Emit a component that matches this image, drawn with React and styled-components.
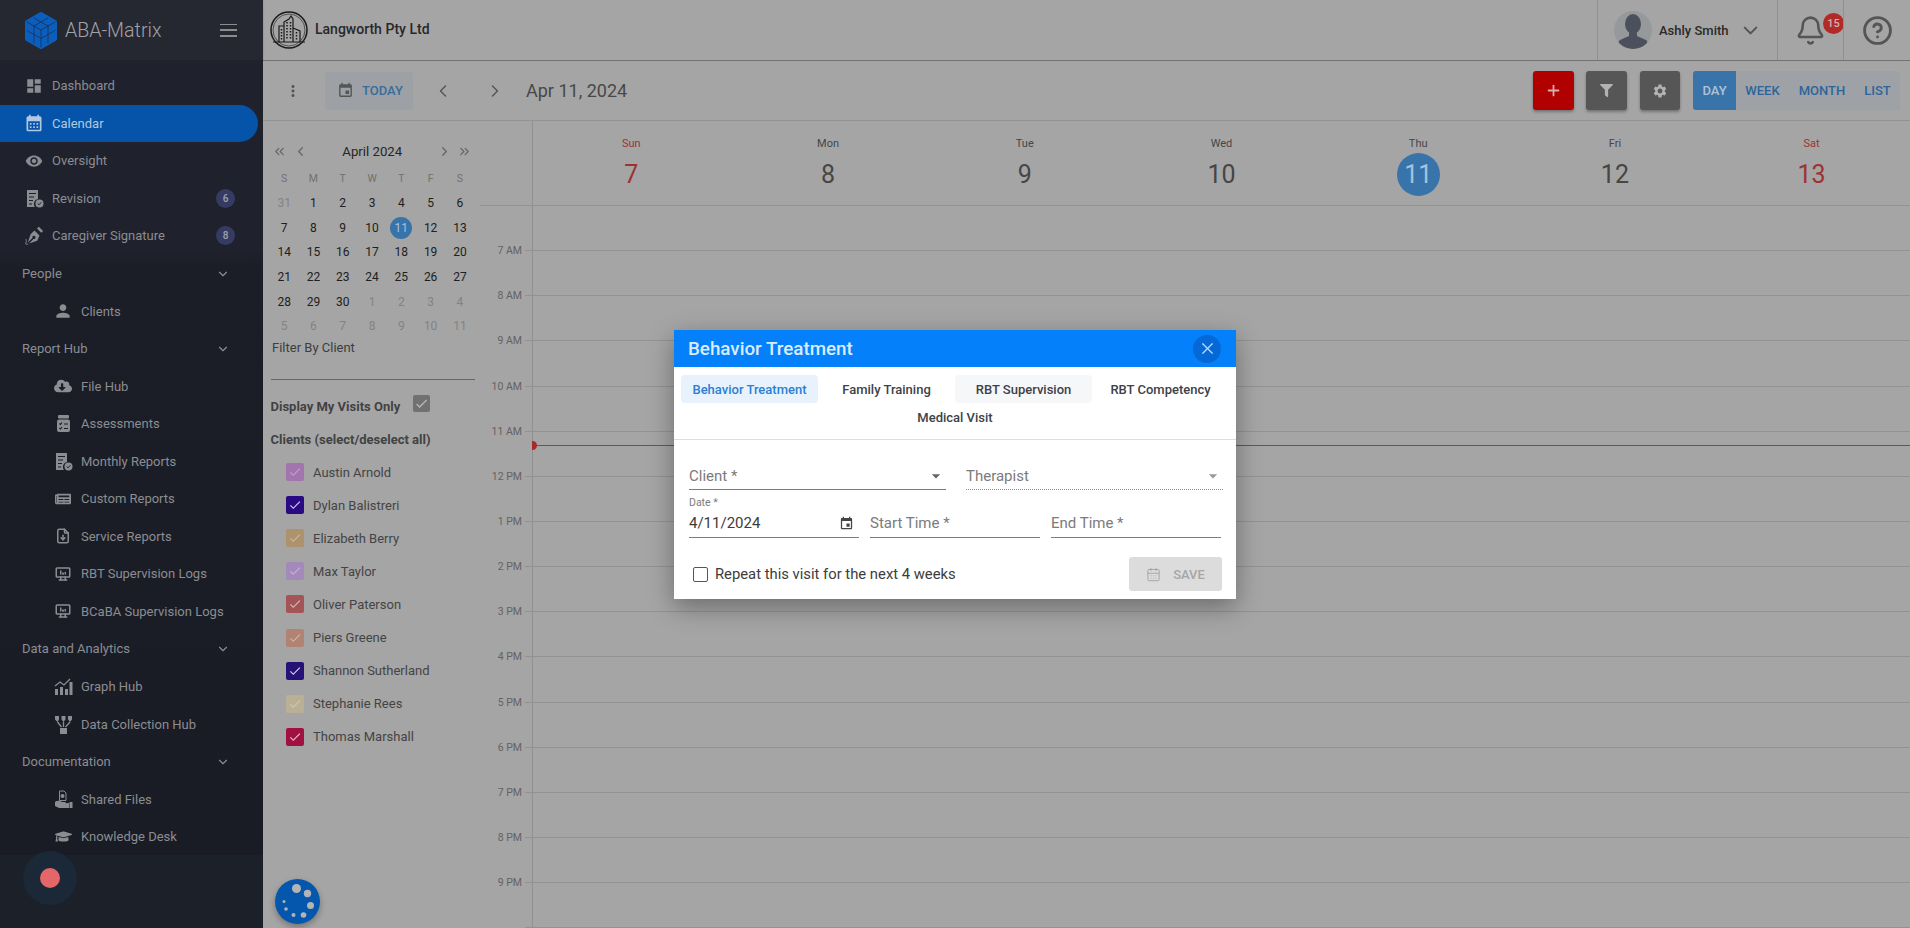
import React from "react";
import styled, { createGlobalStyle } from "styled-components";
import { ChevronDown, ChevronLeft, ChevronRight, ChevronsLeft, ChevronsRight, Bell, CircleHelp, X, Plus, CalendarDays } from "lucide-react";
import { MdDashboard, MdVisibility, MdEvent, MdCalendarMonth, MdPerson, MdSettings, MdCheck, MdArrowDropDown, MdMoreVert } from "react-icons/md";
import { FaCloudDownloadAlt, FaGraduationCap, FaNewspaper, FaFilter } from "react-icons/fa";
import { TbDeviceDesktopAnalytics, TbFileDownload } from "react-icons/tb";

const Global = createGlobalStyle`
  html, body { margin: 0; padding: 0; height: 100%; overflow: hidden; background: #a5a5a5; }
  body { font-family: Roboto, "Liberation Sans", sans-serif; }
  * { box-sizing: border-box; }
`;

const Page = styled.div`
  display: grid;
  grid-template-columns: 263px 1fr;
  width: 1910px;
  height: 928px;
  position: relative;
  background: #a5a5a5;
  overflow: hidden;
`;

/* ---------- sidebar ---------- */
const Sidebar = styled.aside`
  position: relative;
  display: flex;
  flex-direction: column;
  background: #1c1f28;
  min-height: 0;
`;
const Brand = styled.div`
  height: 60px;
  flex: none;
  display: flex;
  align-items: center;
  padding-left: 24px;
  background: #252830;
  box-shadow: 0 1px 2px rgba(0, 0, 0, 0.2);
`;
const BrandName = styled.span`
  margin-left: 7px;
  color: #a0a2a6;
  font-size: 19.6px;
  font-weight: 300;
`;
const Burger = styled.span`
  margin-left: auto;
  margin-right: 26px;
  width: 17px;
  height: 13px;
  display: flex;
  flex-direction: column;
  justify-content: space-between;
  & > i { display: block; height: 1.5px; background: #8a8c90; }
`;
const NavList = styled.nav`
  height: 795px;
  flex: none;
  padding-top: 7px;
  background: linear-gradient(#1f222c 0, #1f222c 24%, #1b1e27 26%, #191c25 100%);
`;
const Row = styled.div`
  height: 37.55px;
  display: flex;
  align-items: center;
  padding-left: ${(p) => (p.$sub ? 53 : 24)}px;
  width: ${(p) => (p.$active ? "258px" : "100%")};
  border-radius: ${(p) => (p.$active ? "0 19px 19px 0" : "0")};
  background: ${(p) => (p.$active ? "#0554aa" : "transparent")};
  color: ${(p) => (p.$active ? "#b2c8e2" : "#8b8d92")};
  font-size: 13px;
`;
const RowIcon = styled.span`
  width: 20px;
  height: 20px;
  margin-right: 8px;
  display: flex;
  align-items: center;
  justify-content: center;
  flex: none;
`;
const Badge = styled.span`
  position: absolute;
  right: 28px;
  width: 19px;
  height: 19px;
  border-radius: 50%;
  background: #353b62;
  color: #a1a3ae;
  font-size: 10px;
  font-weight: 500;
  display: flex;
  align-items: center;
  justify-content: center;
`;
const ItemRow = styled(Row)`
  position: relative;
`;
const GroupRow = styled(Row)`
  padding-left: 22px;
  justify-content: space-between;
  padding-right: 33px;
`;
const SideFooter = styled.div`
  flex: 1;
  background: #1c2029;
`;
const Recorder = styled.div`
  position: absolute;
  left: 23px;
  top: 851px;
  width: 54px;
  height: 54px;
  border-radius: 50%;
  background: #1b2838;
  display: flex;
  align-items: center;
  justify-content: center;
  & > i {
    width: 20px;
    height: 20px;
    border-radius: 50%;
    background: #e46668;
  }
`;

/* ---------- main ---------- */
const Main = styled.main`
  display: flex;
  flex-direction: column;
  min-width: 0;
  min-height: 0;
  color: #444;
`;
const TopBar = styled.header`
  height: 61px;
  flex: none;
  display: flex;
  align-items: center;
  padding-left: 7px;
  border-bottom: 1px solid #727272;
`;
const CompanyName = styled.span`
  margin-left: 7px;
  margin-top: -2px;
  font-size: 14px;
  font-weight: 500;
  color: #282828;
`;
const TopCell = styled.div`
  height: 60px;
  width: ${(p) => p.$w}px;
  border-left: 1px solid #909090;
  display: flex;
  align-items: center;
  position: relative;
  padding-left: ${(p) => p.$pl || 0}px;
  &:first-of-type { margin-left: auto; }
`;
const Avatar = styled.span`
  width: 38px;
  height: 38px;
  border-radius: 50%;
  overflow: hidden;
  background: #96999b;
  flex: none;
`;
const UserName = styled.span`
  margin-left: 7px;
  margin-right: 10px;
  font-size: 13px;
  font-weight: 500;
  color: #2a2a2a;
`;
const BellBadge = styled.span`
  position: absolute;
  left: 45px;
  top: 13px;
  width: 21px;
  height: 21px;
  border-radius: 50%;
  background: #b02b27;
  color: #d4b2b1;
  font-size: 11px;
  font-weight: 500;
  display: flex;
  align-items: center;
  justify-content: center;
`;
const Toolbar = styled.div`
  height: 60px;
  flex: none;
  display: flex;
  align-items: center;
  padding: 0 10px;
  border-bottom: 1px solid #939393;
`;
const PlainIcon = styled.span`
  width: 40px;
  height: 38px;
  margin-right: ${(p) => p.$mr || 0}px;
  margin-left: ${(p) => p.$ml || 0}px;
  display: flex;
  align-items: center;
  justify-content: center;
  color: #555;
`;
const TodayButton = styled.div`
  width: 88px;
  height: 38px;
  display: flex;
  align-items: center;
  padding-left: 12px;
  gap: 8px;
  background: #9da1a6;
  border-radius: 3px;
  color: #3a6c9a;
  font-size: 13px;
  font-weight: 500;
`;
const DateTitle = styled.span`
  margin-left: 11px;
  font-size: 18px;
  color: #484848;
`;
const ActionButton = styled.div`
  width: ${(p) => p.$w || 41}px;
  height: 39px;
  margin-right: ${(p) => p.$mr}px;
  margin-left: ${(p) => (p.$push ? "auto" : "0")};
  border-radius: 3px;
  background: ${(p) => p.$bg};
  color: ${(p) => p.$fg};
  box-shadow: 0 2px 3px rgba(0, 0, 0, 0.3);
  display: flex;
  align-items: center;
  justify-content: center;
`;
const Segment = styled.div`
  display: flex;
  height: 39px;
  width: 207px;
  background: #9ea2a7;
  border-radius: 3px;
  color: #2d659a;
  font-size: 13px;
  font-weight: 500;
`;
const SegmentItem = styled.span`
  display: flex;
  align-items: center;
  justify-content: center;
  width: ${(p) => p.$w}px;
  background: ${(p) => (p.$on ? "#3873aa" : "transparent")};
  color: ${(p) => (p.$on ? "#adc3d7" : "inherit")};
  border-radius: ${(p) => (p.$on ? "3px 0 0 3px" : "0")};
`;
const Body = styled.div`
  flex: 1;
  display: flex;
  min-height: 0;
  position: relative;
`;

/* ---------- left panel ---------- */
const Panel = styled.section`
  width: 217px;
  flex: none;
  padding: 18px 5px 0 6.5px;
  position: relative;
`;
const MonthHeader = styled.div`
  height: 24px;
  display: flex;
  align-items: center;
  color: #555;
  font-size: 13.2px;
`;
const MonthTitle = styled.span`
  flex: 1;
  text-align: center;
  color: #262626;
`;
const MonthNav = styled.span`
  display: flex;
  width: 20.5px;
  justify-content: center;
  color: #666;
`;
const CalGrid = styled.div`
  display: grid;
  grid-template-columns: repeat(7, 29.3px);
  grid-auto-rows: 24.65px;
  margin-top: 3px;
`;
const CalCell = styled.span`
  display: flex;
  align-items: center;
  justify-content: center;
  font-size: ${(p) => (p.$head ? 10.5 : 12)}px;
  color: ${(p) => (p.$head ? "#707070" : p.$muted ? "#838383" : "#202020")};
  position: relative;
`;
const CalToday = styled.span`
  width: 22px;
  height: 22px;
  border-radius: 50%;
  background: #3873aa;
  color: #a5c2de;
  display: flex;
  align-items: center;
  justify-content: center;
`;
const FilterLabel = styled.div`
  padding-left: 2.5px;
  height: 20px;
  line-height: 20px;
  font-size: 13px;
  color: #3d3d3d;
`;
const FilterLine = styled.div`
  height: 1px;
  background: #666;
  margin-top: 21px;
  margin-left: 1px;
`;
const MyVisits = styled.div`
  display: flex;
  align-items: center;
  margin-top: 15px;
  height: 22px;
  padding-left: 1px;
  font-size: 13px;
  font-weight: 700;
  color: #424242;
`;
const GreyCheck = styled.span`
  width: 17px;
  height: 17px;
  margin-left: 13px;
  margin-top: -5px;
  background: #717171;
  border-radius: 2px;
  color: #b6b6b6;
  display: flex;
  align-items: center;
  justify-content: center;
`;
const ClientsTitle = styled.div`
  margin: 13px 0 5px;
  padding-left: 1px;
  height: 20px;
  line-height: 20px;
  font-size: 13px;
  font-weight: 700;
  color: #424242;
`;
const ClientRow = styled.div`
  height: 33.1px;
  display: flex;
  align-items: center;
  padding-left: 16px;
  font-size: 13px;
  color: #444;
`;
const ClientCheck = styled.span`
  width: 18px;
  height: 18px;
  margin-right: 9.5px;
  border-radius: 2px;
  background: ${(p) => p.$c};
  color: ${(p) => p.$k};
  display: flex;
  align-items: center;
  justify-content: center;
`;
const SpinnerFab = styled.div`
  position: absolute;
  left: 12px;
  top: 758px;
  width: 45px;
  height: 45px;
  border-radius: 50%;
  background: #0557ae;
  box-shadow: 0 3px 6px rgba(0, 0, 0, 0.3);
`;

/* ---------- calendar ---------- */
const Schedule = styled.section`
  flex: 1;
  display: flex;
  flex-direction: column;
  min-width: 0;
`;
const DayHead = styled.div`
  height: 84px;
  flex: none;
  margin-left: 52px;
  display: grid;
  grid-template-columns: repeat(7, 1fr);
  border-left: 1px solid #909090;
`;
const DayCol = styled.div`
  display: flex;
  flex-direction: column;
  align-items: center;
  padding-top: 16px;
  color: ${(p) => (p.$red ? "#9c3232" : "#464646")};
`;
const DayName = styled.span`
  font-size: 11px;
  line-height: 14px;
`;
const DayNumber = styled.span`
  margin-top: 2px;
  width: 43px;
  height: 43px;
  border-radius: 50%;
  font-size: 25px;
  display: flex;
  align-items: center;
  justify-content: center;
  background: ${(p) => (p.$on ? "#3873aa" : "transparent")};
  color: ${(p) => (p.$on ? "#a5c2de" : "inherit")};
`;
const HourRow = styled.div`
  height: 45.15px;
  flex: none;
  display: flex;
  position: relative;
`;
const HourLabel = styled.span`
  width: 42px;
  flex: none;
  align-self: flex-end;
  height: 0;
  line-height: 0;
  text-align: right;
  font-size: 10.5px;
  color: #636363;
`;
const HourTick = styled.span`
  width: 7px;
  margin-left: 3px;
  flex: none;
  border-bottom: 1px solid #929292;
`;
const HourLine = styled.span`
  flex: 1;
  border-left: 1px solid #909090;
  border-bottom: 1px solid #929292;
`;
const TopRule = styled.div`
  height: 1px;
  flex: none;
  background: #929292;
`;
const NowLine = styled.div`
  position: absolute;
  left: 52px;
  right: 0;
  top: 13px;
  height: 1px;
  background: #ad3838;
  &::before {
    content: "";
    position: absolute;
    left: 0;
    top: -4px;
    width: 5px;
    height: 9px;
    border-radius: 0 5px 5px 0;
    background: #ad2929;
  }
`;

/* ---------- modal ---------- */
const Backdrop = styled.div`
  position: absolute;
  inset: 0;
  display: flex;
  justify-content: center;
  align-items: flex-start;
  padding-top: 330px;
`;
const Modal = styled.div`
  width: 562px;
  height: 269px;
  background: #fff;
  box-shadow: 0 8px 24px rgba(0, 0, 0, 0.35);
  color: #444;
`;
const ModalHead = styled.div`
  height: 37px;
  background: #0580fb;
  color: #d9ecff;
  display: flex;
  align-items: center;
  justify-content: space-between;
  padding: 0 15px 0 14px;
  font-size: 18.8px;
  font-weight: 500;
`;
const CloseCircle = styled.span`
  width: 28px;
  height: 28px;
  border-radius: 50%;
  background: #0469d6;
  color: #bcdcff;
  display: flex;
  align-items: center;
  justify-content: center;
`;
const Tabs = styled.div`
  height: 73px;
  padding: 8px 7px 0;
  display: flex;
  flex-wrap: wrap;
  justify-content: center;
  align-content: flex-start;
  border-bottom: 1px solid #dedede;
`;
const Tab = styled.span`
  width: 137px;
  height: 28px;
  display: flex;
  align-items: center;
  justify-content: center;
  border-radius: 4px;
  font-size: 13px;
  font-weight: 500;
  background: ${(p) => (p.$on ? "#e8f2fc" : p.$soft ? "#f6f7f8" : "transparent")};
  color: ${(p) => (p.$on ? "#2a7fd5" : "#3d4248")};
`;
const FormRow = styled.div`
  display: flex;
  gap: ${(p) => p.$gap}px;
  padding: ${(p) => p.$pad};
`;
const Field = styled.div`
  width: ${(p) => p.$w}px;
  height: ${(p) => p.$h}px;
  display: flex;
  align-items: center;
  justify-content: space-between;
  font-size: 15px;
  color: ${(p) => (p.$value ? "#3c3c3c" : "#7b7b7b")};
  border-bottom: 1px ${(p) => (p.$dotted ? "dotted #8a8a8a" : "solid #7d7d7d")};
  padding-right: ${(p) => p.$pr || 0}px;
`;
const FieldColumn = styled.div`
  display: flex;
  flex-direction: column;
`;
const TinyLabel = styled.label`
  font-size: 10.5px;
  color: #7b7b7b;
  height: 13px;
  line-height: 13px;
`;
const ModalFoot = styled.div`
  display: flex;
  align-items: center;
  justify-content: space-between;
  padding: 19px 14px 0 19px;
`;
const Repeat = styled.div`
  display: flex;
  align-items: center;
  font-size: 14.8px;
  color: #3c3c3c;
`;
const EmptyBox = styled.span`
  width: 15px;
  height: 15px;
  border: 1.2px solid #555;
  border-radius: 2px;
  margin-right: 7px;
`;
const SaveButton = styled.div`
  width: 93px;
  height: 34px;
  border-radius: 3px;
  background: #dcdcdc;
  color: #a6a6a6;
  display: flex;
  align-items: center;
  justify-content: center;
  gap: 12px;
  font-size: 13px;
  font-weight: 500;
`;

/* ---------- drawings ---------- */
const CubeLogo = () => (
  <svg width="34" height="37" viewBox="0 0 34 37">
    <path d="M17 2 31 10v17L17 35 3 27V10z" fill="#0c5ebc" stroke="#0c5ebc" strokeWidth="4" strokeLinejoin="round" />
    <g stroke="#123563" strokeWidth="0.9" fill="none" strokeLinecap="round">
      <path d="M3 10l14 8 14-8M17 18v17" />
      <path d="M10 6l14 8M24 6l-14 8" />
      <path d="M3 18.500l14 8 14-8M10 14v17M24 14v17" />
    </g>
  </svg>
);
const BuildingLogo = () => (
  <svg width="38" height="38" viewBox="0 0 38 38" fill="none" stroke="#1a1a1a">
    <circle cx="19" cy="19" r="18" strokeWidth="1.5" />
    <circle cx="19" cy="19" r="16" strokeWidth="0.6" />
    <path d="M14 31V11l5-3 2-3 2 3v23M14 15H9v16M23 17l7 3v11M3 31h32" strokeWidth="1.2" />
    <path d="M17 11v18M20.500 11v18M11.500 18v11M26.500 21v8" strokeWidth="1.500" strokeDasharray="1.500 1.500" />
  </svg>
);
const Silhouette = () => (
  <svg width="38" height="38" viewBox="0 0 38 38">
    <ellipse cx="19" cy="13" rx="8" ry="10" fill="#4c4f5c" />
    <path d="M15 22h8v3l9 4c1.500 1 2 5 2 9H4c0-4 .5-8 2-9l9-4z" fill="#4c4f5c" />
  </svg>
);
const Spinner = () => (
  <svg width="45" height="45" viewBox="0 0 45 45" fill="#b4b4b4">
    <circle cx="21.500" cy="9.500" r="4.500" />
    <circle cx="32.500" cy="14.500" r="3.700" />
    <circle cx="35.500" cy="26.500" r="3.500" />
    <circle cx="28.500" cy="36" r="2.800" />
    <circle cx="18.500" cy="36" r="2" />
    <circle cx="11" cy="30" r="1.800" />
    <circle cx="9" cy="22.500" r="1.500" />
  </svg>
);
const ReportCheck = () => (
  <svg width="19" height="19" viewBox="0 0 19 19" fill="#8b8d92">
    <path d="M2 1h11v9a5 5 0 0 0-3 8H2z" />
    <path d="M4 4.500h7M4 8h5M4 11.500h4M4 15h3" stroke="#1b1e27" strokeWidth="1.100" />
    <circle cx="14.500" cy="14.500" r="4" />
    <path d="M12.700 14.500l1.300 1.300 2.300-2.500" stroke="#1b1e27" strokeWidth="1" fill="none" />
  </svg>
);
const NibIcon = () => (
  <svg width="20" height="20" viewBox="0 0 20 20" fill="#8b8d92">
    <path d="M13 2.500l1.800-1.800 4.300 4.300-1.800 1.800z" />
    <path d="M10.500 4.500l5 5-2.300 5.300-8.200 2.700 4.500-4.500a1.600 1.600 0 1 0-1.100-1.100L3.900 16.400l2.700-8.200z" />
    <path d="M1.500 13c1.200.6 1 2.500.3 4-.6 1.300.8 1.700 2.200 1" stroke="#8b8d92" strokeWidth="0.900" fill="none" />
  </svg>
);
const JarIcon = () => (
  <svg width="19" height="19" viewBox="0 0 19 19" fill="#8b8d92">
    <rect x="4" y="1" width="11" height="3.500" rx="1" />
    <rect x="3" y="5.500" width="13" height="12.500" rx="2" />
    <path d="M5.500 9.500l1 1 1.500-2M5.500 14l1 1 1.500-2M10 10h4M10 14.500h4" stroke="#1b1e27" strokeWidth="1.100" fill="none" />
  </svg>
);
const GraphIcon = () => (
  <svg width="19" height="19" viewBox="0 0 19 19" fill="#8b8d92">
    <path d="M1 12h3v6H1zM6 10h3v8H6zM11 12h3v6h-3zM15.500 5h3v13h-3z" />
    <path d="M1 9l5-4 4 3 6-6" stroke="#8b8d92" strokeWidth="1.300" fill="none" />
  </svg>
);
const HubIcon = () => (
  <svg width="19" height="19" viewBox="0 0 19 19" fill="#8b8d92">
    <path d="M1 1h4v3.500L3.500 7 1 4.500zM7.500 1h4v3.500L9.500 7l-2-2.500zM14 1h4v3.500L16 7l-2-2.500zM6 13h7v6H6z" />
    <path d="M3.500 7l4 5M9.500 7v5M16 7l-4.500 5" stroke="#8b8d92" strokeWidth="1.300" />
  </svg>
);
const SharedIcon = () => (
  <svg width="19" height="19" viewBox="0 0 19 19" fill="#8b8d92">
    <path d="M5.500 1h4.500l2 2v7.500H5.500z" fill="none" stroke="#8b8d92" />
    <circle cx="8.500" cy="6" r="2" />
    <path d="M1 12c3-2 5-1 7 0h3c1 0 1 2 0 2H8l6-1 1 0v5H5l-4-2z" />
    <rect x="15.500" y="12" width="3" height="6" />
  </svg>
);

const ic = { size: 18, color: "#8b8d92" };
const nav = [
  { t: "Dashboard", i: <MdDashboard {...ic} /> },
  { t: "Calendar", i: <MdCalendarMonth size={20} color="#b2c8e2" />, active: true },
  { t: "Oversight", i: <MdVisibility {...ic} /> },
  { t: "Revision", i: <ReportCheck />, b: 6 },
  { t: "Caregiver Signature", i: <NibIcon />, b: 8 },
  { g: "People" },
  { t: "Clients", i: <MdPerson size={24} color="#8b8d92" />, sub: true },
  { g: "Report Hub" },
  { t: "File Hub", i: <FaCloudDownloadAlt size={18} color="#8b8d92" />, sub: true },
  { t: "Assessments", i: <JarIcon />, sub: true },
  { t: "Monthly Reports", i: <ReportCheck />, sub: true },
  { t: "Custom Reports", i: <FaNewspaper size={16} color="#8b8d92" />, sub: true },
  { t: "Service Reports", i: <TbFileDownload size={18} color="#8b8d92" />, sub: true },
  { t: "RBT Supervision Logs", i: <TbDeviceDesktopAnalytics size={18} color="#8b8d92" />, sub: true },
  { t: "BCaBA Supervision Logs", i: <TbDeviceDesktopAnalytics size={18} color="#8b8d92" />, sub: true },
  { g: "Data and Analytics" },
  { t: "Graph Hub", i: <GraphIcon />, sub: true },
  { t: "Data Collection Hub", i: <HubIcon />, sub: true },
  { g: "Documentation" },
  { t: "Shared Files", i: <SharedIcon />, sub: true },
  { t: "Knowledge Desk", i: <FaGraduationCap size={17} color="#8b8d92" />, sub: true },
];

const weekdays = ["S", "M", "T", "W", "T", "F", "S"];
const miniDays = [
  [31, 1], [1], [2], [3], [4], [5], [6], [7], [8], [9], [10], [11, 0], [12], [13], [14], [15], [16], [17], [18], [19], [20],
  [21], [22], [23], [24], [25], [26], [27], [28], [29], [30], [1, 1], [2, 1], [3, 1], [4, 1], [5, 1], [6, 1], [7, 1], [8, 1], [9, 1], [10, 1], [11, 1],
];
const clients = [
  ["Austin Arnold", "#a474ae", "#c2a0c9"],
  ["Dylan Balistreri", "#2a0a84", "#d2cbe8"],
  ["Elizabeth Berry", "#ac926d", "#c8b89c"],
  ["Max Taylor", "#a48abb", "#c5b3d4"],
  ["Oliver Paterson", "#a45456", "#d4b9b9"],
  ["Piers Greene", "#b28373", "#d0b5aa"],
  ["Shannon Sutherland", "#261276", "#d6d2e8"],
  ["Stephanie Rees", "#baB096", "#cec7b2"],
  ["Thomas Marshall", "#a01142", "#e4c2cd"],
];
const days = [
  ["Sun", 7, true], ["Mon", 8], ["Tue", 9], ["Wed", 10], ["Thu", 11, false, true], ["Fri", 12], ["Sat", 13, true],
];
const hours = ["7 AM", "8 AM", "9 AM", "10 AM", "11 AM", "12 PM", "1 PM", "2 PM", "3 PM", "4 PM", "5 PM", "6 PM", "7 PM", "8 PM", "9 PM", ""];

export default function App() {
  return (
    <Page>
      <Global />
      <Sidebar>
        <Brand>
          <CubeLogo />
          <BrandName>ABA-Matrix</BrandName>
          <Burger><i /><i /><i /></Burger>
        </Brand>
        <NavList>
          {nav.map((n) =>
            n.g ? (
              <GroupRow key={n.g}>
                {n.g}
                <ChevronDown size={14} />
              </GroupRow>
            ) : (
              <ItemRow key={n.t} $sub={n.sub} $active={n.active}>
                <RowIcon>{n.i}</RowIcon>
                {n.t}
                {n.b && <Badge>{n.b}</Badge>}
              </ItemRow>
            )
          )}
        </NavList>
        <SideFooter />
        <Recorder><i /></Recorder>
      </Sidebar>

      <Main>
        <TopBar>
          <BuildingLogo />
          <CompanyName>Langworth Pty Ltd</CompanyName>
          <TopCell $w={180} $pl={16}>
            <Avatar><Silhouette /></Avatar>
            <UserName>Ashly Smith</UserName>
            <ChevronDown size={23} color="#555" strokeWidth={2.2} />
          </TopCell>
          <TopCell $w={66} $pl={17}>
            <Bell size={31} color="#555" strokeWidth={2} />
            <BellBadge>15</BellBadge>
          </TopCell>
          <TopCell $w={67} $pl={18}>
            <CircleHelp size={31} color="#555" strokeWidth={2.2} />
          </TopCell>
        </TopBar>
        <Toolbar>
          <PlainIcon $mr={12}><MdMoreVert size={18} /></PlainIcon>
          <TodayButton><MdEvent size={17} color="#555" />TODAY</TodayButton>
          <PlainIcon $ml={10} $mr={12}><ChevronLeft size={20} strokeWidth={1.7} /></PlainIcon>
          <PlainIcon><ChevronRight size={20} strokeWidth={1.7} /></PlainIcon>
          <DateTitle>Apr 11, 2024</DateTitle>
          <ActionButton $push $mr={12} $bg="#b00000" $fg="#d8aeae"><Plus size={17} strokeWidth={2.5} /></ActionButton>
          <ActionButton $mr={13} $bg="#565656" $fg="#b2b2b2"><FaFilter size={13} /></ActionButton>
          <ActionButton $mr={13} $bg="#565656" $fg="#b2b2b2" $w={40}><MdSettings size={16} /></ActionButton>
          <Segment>
            <SegmentItem $w={43} $on>DAY</SegmentItem>
            <SegmentItem $w={53}>WEEK</SegmentItem>
            <SegmentItem $w={66}>MONTH</SegmentItem>
            <SegmentItem $w={45}>LIST</SegmentItem>
          </Segment>
        </Toolbar>
        <Body>
          <Panel>
            <MonthHeader>
              <MonthNav><ChevronsLeft size={15} /></MonthNav>
              <MonthNav><ChevronLeft size={15} /></MonthNav>
              <MonthTitle>April 2024</MonthTitle>
              <MonthNav><ChevronRight size={15} /></MonthNav>
              <MonthNav><ChevronsRight size={15} /></MonthNav>
            </MonthHeader>
            <CalGrid>
              {weekdays.map((d, i) => <CalCell key={i} $head>{d}</CalCell>)}
              {miniDays.map(([d, flag], i) => (
                <CalCell key={i} $muted={flag === 1}>
                  {flag === 0 ? <CalToday>{d}</CalToday> : d}
                </CalCell>
              ))}
            </CalGrid>
            <FilterLabel>Filter By Client</FilterLabel>
            <FilterLine />
            <MyVisits>
              Display My Visits Only
              <GreyCheck><MdCheck size={15} /></GreyCheck>
            </MyVisits>
            <ClientsTitle>Clients (select/deselect all)</ClientsTitle>
            {clients.map(([n, c, k]) => (
              <ClientRow key={n}>
                <ClientCheck $c={c} $k={k}><MdCheck size={14} /></ClientCheck>
                {n}
              </ClientRow>
            ))}
            <SpinnerFab><Spinner /></SpinnerFab>
          </Panel>
          <Schedule>
            <DayHead>
              {days.map(([n, d, red, on]) => (
                <DayCol key={n} $red={red}>
                  <DayName>{n}</DayName>
                  <DayNumber $on={on}>{d}</DayNumber>
                </DayCol>
              ))}
            </DayHead>
            <TopRule />
            {hours.map((h) => (
              <HourRow key={h || "end"}>
                <HourLabel>{h}</HourLabel>
                <HourTick />
                <HourLine />
                {h === "12 PM" && <NowLine />}
              </HourRow>
            ))}
          </Schedule>
        </Body>
      </Main>

      <Backdrop>
        <Modal>
          <ModalHead>
            Behavior Treatment
            <CloseCircle><X size={19} strokeWidth={1.5} /></CloseCircle>
          </ModalHead>
          <Tabs>
            <Tab $on>Behavior Treatment</Tab>
            <Tab>Family Training</Tab>
            <Tab $soft>RBT Supervision</Tab>
            <Tab>RBT Competency</Tab>
            <Tab>Medical Visit</Tab>
          </Tabs>
          <FormRow $gap={20} $pad="22px 0 0 15px">
            <Field $w={257} $h={28}>Client *<MdArrowDropDown size={20} color="#666" /></Field>
            <Field $w={257} $h={28} $dotted>Therapist<MdArrowDropDown size={20} color="#999" /></Field>
          </FormRow>
          <FormRow $gap={11} $pad="6px 0 0 15px">
            <FieldColumn>
              <TinyLabel>Date *</TinyLabel>
              <Field $w={170} $h={29} $value $pr={5}>4/11/2024<MdEvent size={15} color="#444" /></Field>
            </FieldColumn>
            <FieldColumn>
              <TinyLabel />
              <Field $w={170} $h={29}>Start Time *</Field>
            </FieldColumn>
            <FieldColumn>
              <TinyLabel />
              <Field $w={170} $h={29}>End Time *</Field>
            </FieldColumn>
          </FormRow>
          <ModalFoot>
            <Repeat><EmptyBox />Repeat this visit for the next 4 weeks</Repeat>
            <SaveButton><CalendarDays size={15} strokeWidth={1.6} />SAVE</SaveButton>
          </ModalFoot>
        </Modal>
      </Backdrop>
    </Page>
  );
}
